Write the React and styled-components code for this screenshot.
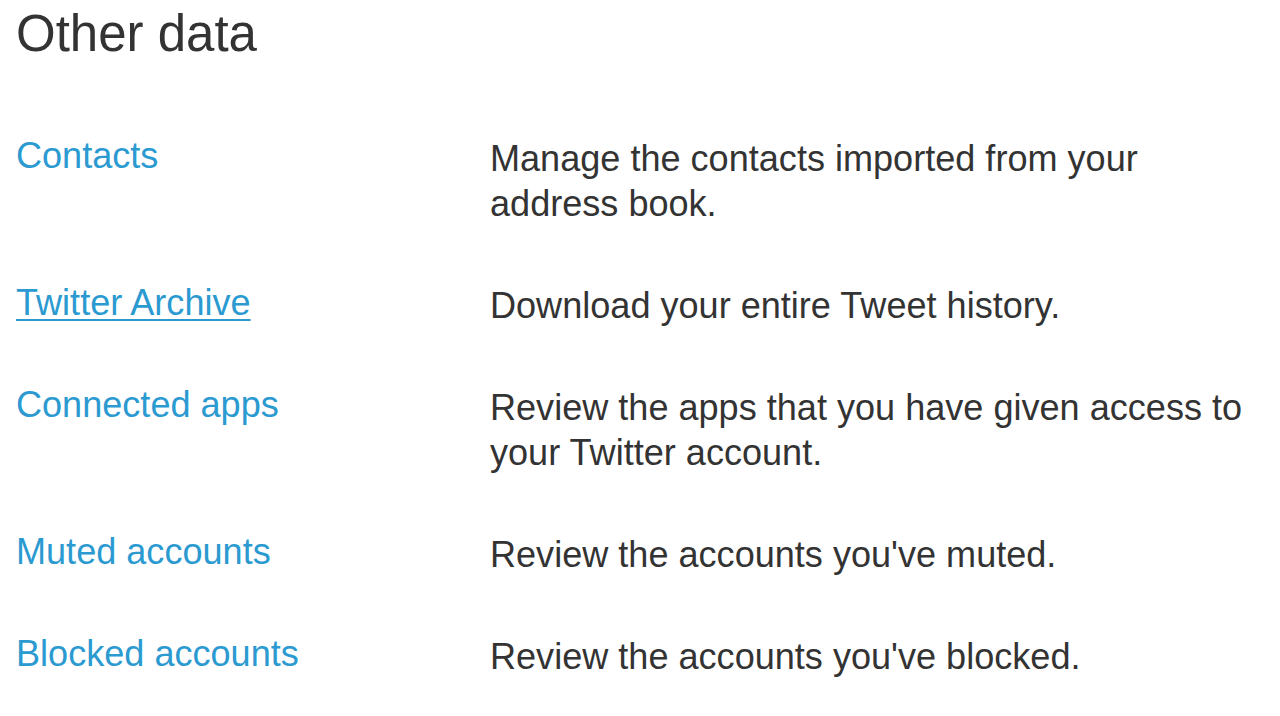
import React from "react";
import styled, { createGlobalStyle } from "styled-components";

const GlobalStyle = createGlobalStyle`
  html, body {
    margin: 0;
    padding: 0;
    background: #ffffff;
  }
  body {
    font-family: "Liberation Sans", Arial, sans-serif;
    color: #333333;
  }
`;

const Page = styled.div`
  padding: 6px 15px 0 16px;
  box-sizing: border-box;
  width: 1280px;
`;

const Title = styled.h2`
  margin: 0;
  font-size: 51px;
  line-height: 56px;
  font-weight: normal;
  color: #333333;
`;

const List = styled.div`
  margin-top: 45px;
  display: flex;
  flex-direction: column;
`;

const Row = styled.div`
  display: grid;
  grid-template-columns: 474px 1fr;
  align-items: start;
  padding: 28.5px 0 28.6px;
`;

const ItemLink = styled.a`
  font-size: 36.1px;
  line-height: 40px;
  color: #2b9ad1;
  text-decoration: ${(p) => (p.$hover ? "underline" : "none")};
  text-decoration-thickness: 2px;
  text-underline-offset: 4px;
  justify-self: start;
  cursor: pointer;
`;

const Description = styled.p`
  margin: 0;
  font-size: 36.1px;
  line-height: 45px;
  color: #333333;
`;

const items = [
  { label: "Contacts", text: "Manage the contacts imported from your address book." },
  { label: "Twitter Archive", text: "Download your entire Tweet history.", hover: true },
  { label: "Connected apps", text: "Review the apps that you have given access to your Twitter account." },
  { label: "Muted accounts", text: "Review the accounts you've muted." },
  { label: "Blocked accounts", text: "Review the accounts you've blocked." },
];

export default function App() {
  return (
    <>
      <GlobalStyle />
      <Page>
        <Title>Other data</Title>
        <List>
          {items.map((it) => (
            <Row key={it.label}>
              <ItemLink href="#" $hover={it.hover}>{it.label}</ItemLink>
              <Description>{it.text}</Description>
            </Row>
          ))}
        </List>
      </Page>
    </>
  );
}
